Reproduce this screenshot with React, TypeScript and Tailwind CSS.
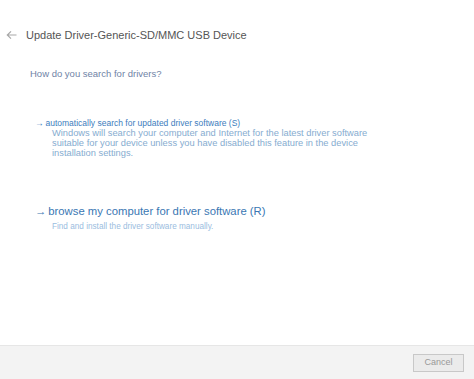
import React from 'react';

export default function App() {
  return (
    <div
      className="w-[474px] h-[379px] bg-white flex flex-col overflow-hidden"
      style={{ fontFamily: '"Liberation Sans", Arial, sans-serif' }}
    >
      <div className="flex-1 flex flex-col">
        <div className="flex items-center pt-[28px] pl-[6px]">
          <svg width="11" height="10" viewBox="0 0 11 10" className="mr-[9px]" fill="none" stroke="#a8a8a8" strokeWidth="1.2">
            <path d="M10.5 5H1.5M5 1.3L1.3 5L5 8.7" />
          </svg>
          <h1 className="text-[11px] text-[#555] leading-[14px]">Update Driver-Generic-SD/MMC USB Device</h1>
        </div>

        <p className="mt-[26px] ml-[30px] text-[9.5px] text-[#6f83a6] leading-[11px]">
          How do you search for drivers?
        </p>

        <div className="mt-[39px] ml-[35px]">
          <div className="text-[8.5px] text-[#3d7dbd] leading-[10px]">
            <span className="mr-[2px]">→</span>automatically search for updated driver software (S)
          </div>
          <p className="ml-[17px] w-[330px] text-[9.3px] text-[#86acd0] leading-[10px]">
            Windows will search your computer and Internet for the latest driver software
            suitable for your device unless you have disabled this feature in the device
            installation settings.
          </p>
        </div>

        <div className="mt-[47px] ml-[35px]">
          <div className="text-[11.3px] text-[#3a77b3] leading-[13px]">
            <span className="mr-[2px]">→</span>browse my computer for driver software (R)
          </div>
          <p className="ml-[17px] mt-[4px] text-[8.2px] text-[#9bbde0] leading-[9px]">
            Find and install the driver software manually.
          </p>
        </div>
      </div>

      <div className="h-[34px] bg-[#f3f3f3] border-t border-[#e6e6e6] flex items-center justify-end pr-[10px]">
        <button className="w-[51px] h-[18px] border border-[#c8c8c8] bg-[#ebebeb] text-[9px] text-[#999] leading-none">
          Cancel
        </button>
      </div>
    </div>
  );
}
